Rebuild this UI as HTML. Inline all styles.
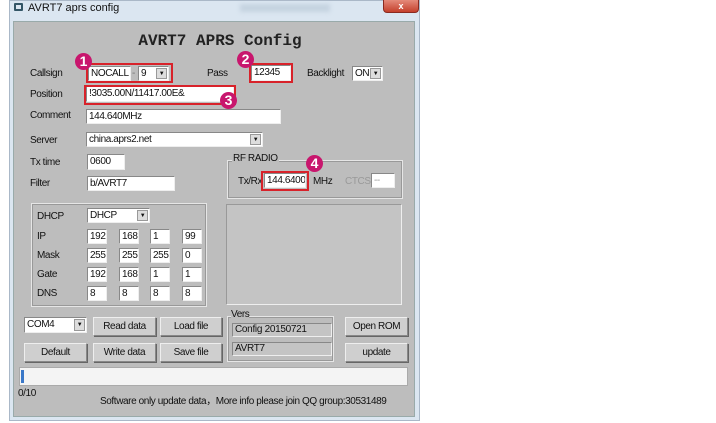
<!DOCTYPE html>
<html><head><meta charset="utf-8"><style>
*{margin:0;padding:0;box-sizing:border-box}
body{width:716px;height:423px;background:#fff;position:relative;overflow:hidden;font-family:"Liberation Sans",sans-serif;font-size:10px;color:#111}
.a{position:absolute}
.frame{left:9px;top:0;width:411px;height:421px;background:#dbe6f1;border:1px solid #aab8c8}
.panel{left:13px;top:21px;width:402px;height:396px;background:#bdbdbd;border:1px solid #9aa}
.lbl{position:absolute;font-size:10px;white-space:nowrap;letter-spacing:-0.4px}
.in{position:absolute;background:#fff;border:1px solid #888;border-right-color:#eee;border-bottom-color:#eee;font-size:10px;padding:1px 2px;line-height:12px;white-space:nowrap;overflow:hidden;letter-spacing:-0.4px}
.dd{position:absolute;right:1px;top:1px;bottom:1px;width:11px;background:#ddd;border:1px solid #999;font-size:6px;text-align:center;line-height:11px}
.red{position:absolute;border:2px solid #d8222a}
.bd{position:absolute;width:17px;height:17px;border-radius:50%;background:#c8166d;color:#fff;font-weight:bold;font-size:14px;text-align:center;line-height:17px;font-family:"Liberation Sans",sans-serif}
.btn{position:absolute;background:#cfcfcf;border:1px solid #888;border-top-color:#eee;border-left-color:#eee;box-shadow:1px 1px 0 #666;text-align:center;font-size:10px;line-height:17px;letter-spacing:-0.4px}
.grp{position:absolute;border:1px solid #e6e6e6;outline:1px solid #999;outline-offset:-2px}
.ro{position:absolute;background:#c4c4c4;border:1px solid #888;border-right-color:#eee;border-bottom-color:#eee;font-size:10px;padding:0 2px;line-height:12px;letter-spacing:-0.3px}
</style></head><body>
<div class="a frame"></div>
<div class="a" style="left:14px;top:3px;width:9px;height:8px;border:2px solid #356;border-radius:1px"></div>
<div class="a" style="left:28px;top:2px;font-size:11px;color:#111">AVRT7 aprs config</div>
<div class="a" style="left:240px;top:4px;width:90px;height:8px;background:#c5d3e0;filter:blur(2px)"></div>
<div class="a" style="left:383px;top:0;width:36px;height:13px;background:linear-gradient(#e48a7a,#c4402c);border:1px solid #8a2a20;border-top:none;border-radius:0 0 4px 4px;color:#fff;font-size:9px;font-weight:bold;text-align:center;line-height:12px">x</div>
<div class="a panel"></div>

<div class="a" style="left:0;width:440px;top:32px;text-align:center;font-family:'Liberation Mono',monospace;font-weight:bold;font-size:16px;color:#222">AVRT7 APRS Config</div>

<div class="lbl" style="left:30px;top:68px">Callsign</div>
<div class="in" style="left:88px;top:66px;width:43px;height:15px">NOCALL</div>
<div class="lbl" style="left:132px;top:68px;color:#777">-</div>
<div class="in" style="left:138px;top:66px;width:31px;height:15px">9<div class="dd">▼</div></div>
<div class="red" style="left:86px;top:63px;width:87px;height:20px"></div>
<div class="bd" style="left:75px;top:53px">1</div>

<div class="lbl" style="left:207px;top:68px">Pass</div>
<div class="in" style="left:251px;top:65px;width:40px;height:16px">12345</div>
<div class="red" style="left:249px;top:63px;width:44px;height:20px"></div>
<div class="bd" style="left:237px;top:51px">2</div>

<div class="lbl" style="left:307px;top:68px">Backlight</div>
<div class="in" style="left:352px;top:66px;width:31px;height:15px">ON<div class="dd">▼</div></div>

<div class="lbl" style="left:30px;top:89px">Position</div>
<div class="in" style="left:86px;top:86px;width:148px;height:16px">!3035.00N/11417.00E&amp;</div>
<div class="red" style="left:84px;top:85px;width:152px;height:20px"></div>
<div class="bd" style="left:220px;top:92px">3</div>

<div class="lbl" style="left:30px;top:110px">Comment</div>
<div class="in" style="left:86px;top:109px;width:195px;height:15px">144.640MHz</div>

<div class="lbl" style="left:30px;top:135px">Server</div>
<div class="in" style="left:86px;top:132px;width:177px;height:15px">china.aprs2.net<div class="dd">▼</div></div>

<div class="lbl" style="left:30px;top:157px">Tx time</div>
<div class="in" style="left:87px;top:154px;width:38px;height:16px">0600</div>
<div class="lbl" style="left:30px;top:178px">Filter</div>
<div class="in" style="left:87px;top:176px;width:88px;height:15px">b/AVRT7</div>

<div class="grp" style="left:227px;top:160px;width:176px;height:39px"></div>
<div class="lbl" style="left:232px;top:153px;background:#bdbdbd;padding:0 1px">RF RADIO</div>
<div class="lbl" style="left:238px;top:176px">Tx/Rx</div>
<div class="in" style="left:264px;top:173px;width:42px;height:15px">144.6400</div>
<div class="red" style="left:261px;top:171px;width:48px;height:20px"></div>
<div class="bd" style="left:306px;top:155px">4</div>
<div class="lbl" style="left:313px;top:176px">MHz</div>
<div class="lbl" style="left:345px;top:176px;color:#999">CTCSS</div>
<div class="in" style="left:371px;top:173px;width:24px;height:15px;color:#999">--</div>

<div class="a" style="left:226px;top:204px;width:176px;height:101px;background:#c4c4c4;border:1px solid #999;border-right-color:#eee;border-bottom-color:#eee"></div>

<div class="grp" style="left:31px;top:203px;width:176px;height:104px"></div>
<div class="lbl" style="left:37px;top:211px">DHCP</div>
<div class="in" style="left:87px;top:208px;width:63px;height:15px">DHCP<div class="dd">▼</div></div>
<div class="lbl" style="left:37px;top:231px">IP</div>
<div class="lbl" style="left:37px;top:250px">Mask</div>
<div class="lbl" style="left:37px;top:269px">Gate</div>
<div class="lbl" style="left:37px;top:288px">DNS</div>
<div class="in" style="left:87px;top:229px;width:20px;height:15px">192</div>
<div class="in" style="left:119px;top:229px;width:20px;height:15px">168</div>
<div class="in" style="left:150px;top:229px;width:20px;height:15px">1</div>
<div class="in" style="left:182px;top:229px;width:20px;height:15px">99</div>
<div class="in" style="left:87px;top:248px;width:20px;height:15px">255</div>
<div class="in" style="left:119px;top:248px;width:20px;height:15px">255</div>
<div class="in" style="left:150px;top:248px;width:20px;height:15px">255</div>
<div class="in" style="left:182px;top:248px;width:20px;height:15px">0</div>
<div class="in" style="left:87px;top:267px;width:20px;height:15px">192</div>
<div class="in" style="left:119px;top:267px;width:20px;height:15px">168</div>
<div class="in" style="left:150px;top:267px;width:20px;height:15px">1</div>
<div class="in" style="left:182px;top:267px;width:20px;height:15px">1</div>
<div class="in" style="left:87px;top:286px;width:20px;height:15px">8</div>
<div class="in" style="left:119px;top:286px;width:20px;height:15px">8</div>
<div class="in" style="left:150px;top:286px;width:20px;height:15px">8</div>
<div class="in" style="left:182px;top:286px;width:20px;height:15px">8</div>

<div class="in" style="left:24px;top:317px;width:63px;height:16px">COM4<div class="dd">▼</div></div>
<div class="btn" style="left:93px;top:317px;width:63px;height:19px">Read data</div>
<div class="btn" style="left:160px;top:317px;width:62px;height:19px">Load file</div>
<div class="btn" style="left:24px;top:343px;width:63px;height:19px">Default</div>
<div class="btn" style="left:93px;top:343px;width:63px;height:19px">Write data</div>
<div class="btn" style="left:160px;top:343px;width:62px;height:19px">Save file</div>
<div class="grp" style="left:227px;top:316px;width:107px;height:46px"></div>
<div class="lbl" style="left:231px;top:309px;background:#bdbdbd">Vers</div>
<div class="ro" style="left:232px;top:323px;width:100px;height:14px">Config 20150721</div>
<div class="ro" style="left:232px;top:342px;width:100px;height:14px">AVRT7</div>
<div class="btn" style="left:345px;top:317px;width:63px;height:19px">Open ROM</div>
<div class="btn" style="left:345px;top:343px;width:63px;height:19px">update</div>

<div class="a" style="left:19px;top:367px;width:389px;height:19px;background:#f4f4f4;border:1px solid #aaa"></div>
<div class="a" style="left:21px;top:370px;width:3px;height:13px;background:#3a78c8"></div>
<div class="lbl" style="left:18px;top:388px">0/10</div>
<div class="lbl" style="left:100px;top:392px">Software only update data，More info please join QQ group:30531489</div>
</body></html>
